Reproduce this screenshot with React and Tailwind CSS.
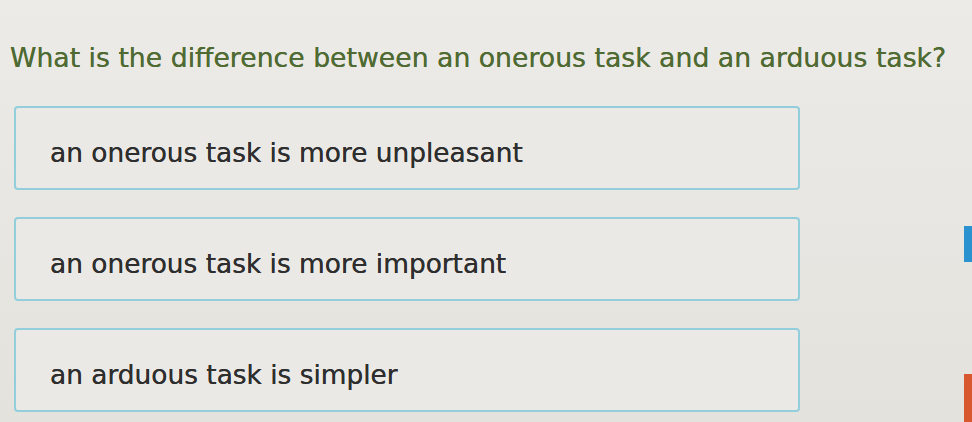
const options = [
  "an onerous task is more unpleasant",
  "an onerous task is more important",
  "an arduous task is simpler",
];

export default function App() {
  return (
    <div className="w-[972px] h-[422px] overflow-hidden flex bg-gradient-to-b from-[#ecebe7] to-[#e4e2dd] font-['DejaVu_Sans',Verdana,sans-serif]">
      <div className="flex-1 pl-[10px] pt-[42px]">
        <h1 className="text-[26.7px] leading-[32px] text-[#4f6a32] [text-shadow:0_0_0.6px_#4f6a32] whitespace-nowrap">
          What is the difference between an onerous task and an arduous task?
        </h1>

        <div className="mt-[32px] flex flex-col gap-[27px] w-[786px] ml-[4px]">
          {options.map((opt) => (
            <div
              key={opt}
              className="h-[84px] flex items-center pl-[34px] pt-[10px] border-2 border-[#93cedd] rounded-[4px] bg-[#ebe9e5]"
            >
              <span className="text-[26.4px] text-[#2e2e2e] [text-shadow:0_0_0.5px_#2e2e2e]">{opt}</span>
            </div>
          ))}
        </div>
      </div>

      <div className="w-[8px] flex flex-col">
        <div className="h-[226px]" />
        <div className="h-[36px] bg-[#2a93cf]" />
        <div className="h-[112px]" />
        <div className="flex-1 bg-[#d9572e]" />
      </div>
    </div>
  );
}
